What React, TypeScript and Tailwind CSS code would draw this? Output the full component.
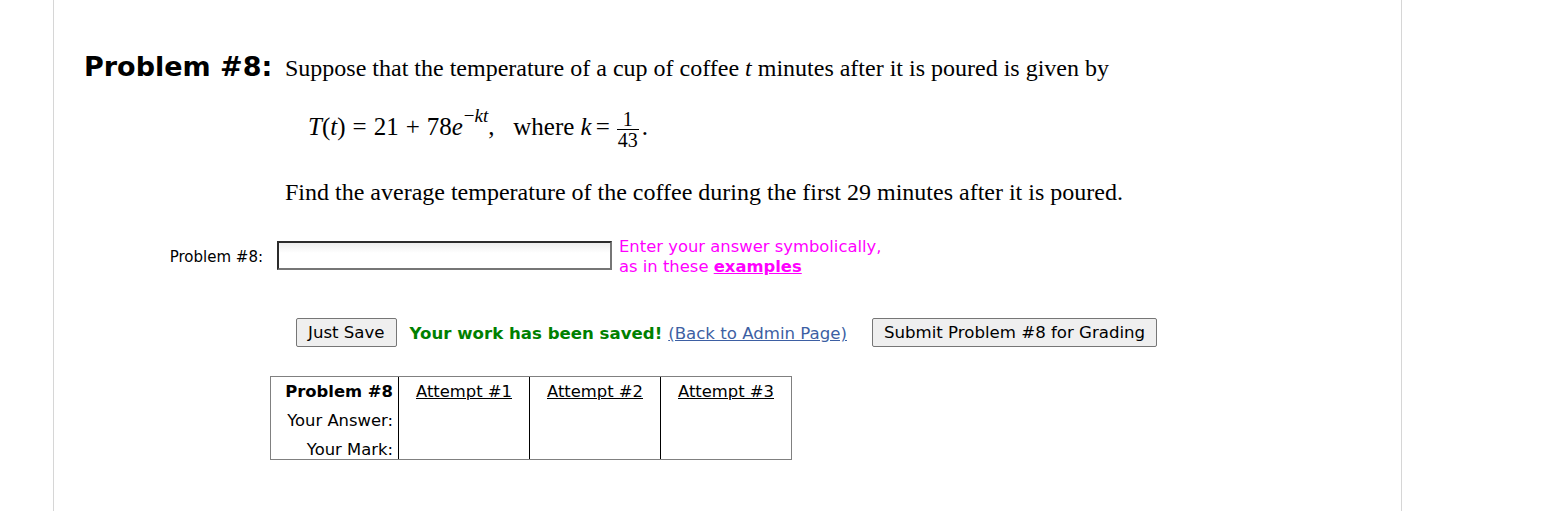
const SANS = "font-['DejaVu_Sans',Verdana,sans-serif]";
const SERIF = "font-['Liberation_Serif','Times_New_Roman',serif]";

function Fraction({ num, den }: { num: string; den: string }) {
  return (
    <span className="inline-flex flex-col items-center align-middle mx-[3px] my-[-11px] text-[20px] leading-[20px]">
      <span className="px-[1px]">{num}</span>
      <span className="h-px w-full bg-black" />
      <span className="px-[1px]">{den}</span>
    </span>
  );
}

function Button({ children }: { children: React.ReactNode }) {
  return (
    <button className="h-[29px] px-[11px] pt-[2px] rounded-[2px] border border-[#767676] bg-[#efefef] text-[16.6px] text-black leading-none">
      {children}
    </button>
  );
}

export default function App() {
  return (
    <div className="bg-white min-h-[511px]">
      <div className={`ml-[53px] w-[1349px] h-[511px] border-x border-[#d6d6d6] pl-[30px] text-black ${SANS}`}>
        {/* statement */}
        <div className="flex items-baseline pt-[53px]">
          <h2 className="w-[201px] shrink-0 text-[27px] font-bold leading-none">Problem #8:</h2>
          <div className={`${SERIF} text-[24px] leading-[28px]`}>
            Suppose that the temperature of a cup of coffee <i>t</i> minutes after it is poured is given by
          </div>
        </div>

        <div className={`${SERIF} ml-[201px] text-[24px] leading-[28px]`}>
          <div className="mt-[31px] pl-[23px] whitespace-nowrap text-[25px]">
            <i>T</i>(<i>t</i>)<span className="mx-[7px]">=</span>21<span className="mx-[7px]">+</span>78<i>e</i>
            <sup className="top-[-13px] text-[19px] ml-[1px]">
              −<i>kt</i>
            </sup>
            ,&nbsp;&nbsp; where <i>k</i>
            <span className="mx-[4px]">=</span>
            <Fraction num="1" den="43" />.
          </div>
          <div className="mt-[37px]">
            Find the average temperature of the coffee during the first 29 minutes after it is poured.
          </div>
        </div>

        {/* answer */}
        <div className="flex items-center mt-[29px]">
          <label className="relative top-[2px] w-[179px] text-right text-[15px]">Problem #8:</label>
          <input
            className="ml-[14px] w-[335px] h-[29px] border-2 border-t-[#2b2b2b] border-l-[#2b2b2b] border-b-[#767676] border-r-[#767676] bg-[linear-gradient(180deg,#ececec,#ffffff_40%)] outline-none"
            type="text"
          />
          <div className="relative top-[2px] ml-[7px] text-[16.4px] leading-[20px] text-[#ff00ff]">
            Enter your answer symbolically,
            <br />
            as in these{' '}
            <a href="#" className="font-bold underline">
              examples
            </a>
          </div>
        </div>

        {/* actions */}
        <div className="flex items-center ml-[212px] mt-[43px] text-[16.6px]">
          <Button>Just Save</Button>
          <span className="relative top-[2px] ml-[13px] font-bold text-[#008000]">Your work has been saved!</span>
          <a href="#" className="relative top-[2px] ml-[6px] text-[#3d5fa3] underline">
            (Back to Admin Page)
          </a>
          <div className="ml-[25px]">
            <Button>Submit Problem #8 for Grading</Button>
          </div>
        </div>

        {/* attempts */}
        <div className="ml-[186px] mt-[29px] flex w-[522px] h-[84px] border border-[#808080] text-[16.4px]">
          <div className="w-[127px] text-right pr-[5px] leading-[29px]">
            <div className="font-bold">Problem #8</div>
            <div>Your Answer:</div>
            <div>Your Mark:</div>
          </div>
          {['Attempt #1', 'Attempt #2', 'Attempt #3'].map((a) => (
            <div key={a} className="flex-1 border-l border-black text-center leading-[29px]">
              <a href="#" className="underline">
                {a}
              </a>
            </div>
          ))}
        </div>
      </div>
    </div>
  );
}
